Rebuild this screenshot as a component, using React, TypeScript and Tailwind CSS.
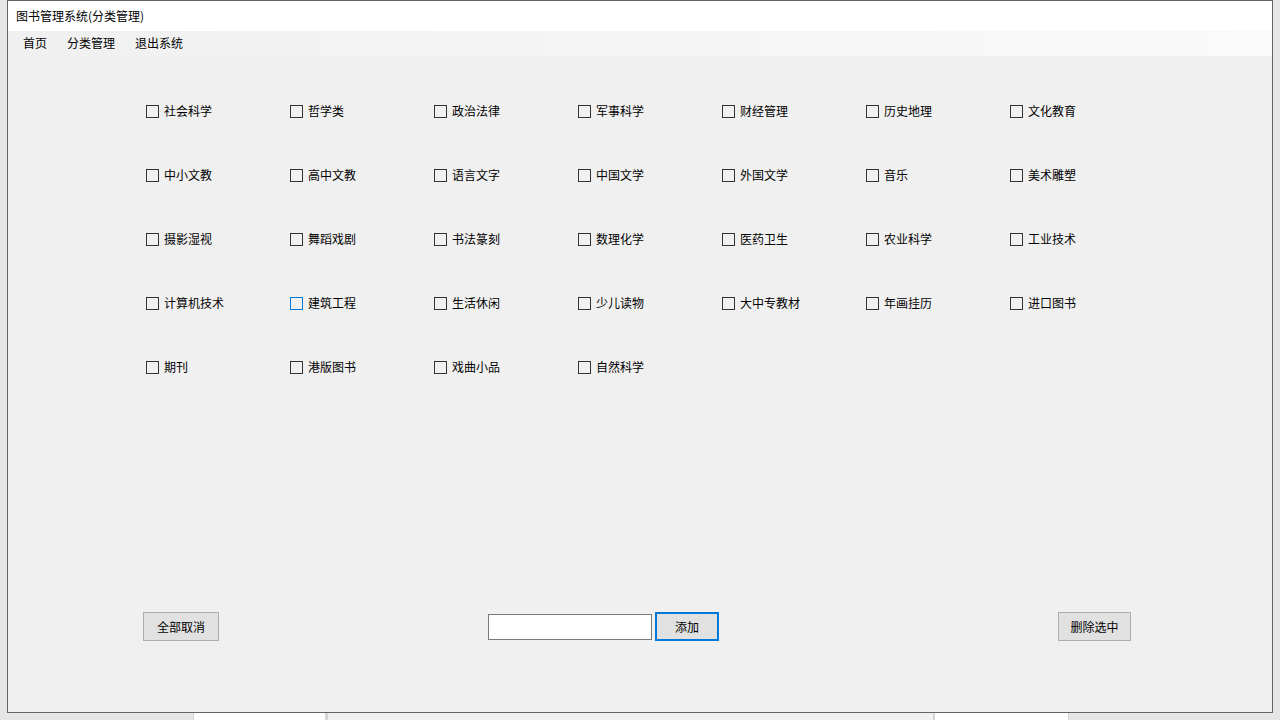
import React from 'react';

const categories = [
  ['社会科学', '哲学类', '政治法律', '军事科学', '财经管理', '历史地理', '文化教育'],
  ['中小文教', '高中文教', '语言文字', '中国文学', '外国文学', '音乐', '美术雕塑'],
  ['摄影湿视', '舞蹈戏剧', '书法篆刻', '数理化学', '医药卫生', '农业科学', '工业技术'],
  ['计算机技术', '建筑工程', '生活休闲', '少儿读物', '大中专教材', '年画挂历', '进口图书'],
  ['期刊', '港版图书', '戏曲小品', '自然科学'],
];

const font = "font-['Noto_Sans_CJK_SC','Noto_Sans',sans-serif]";

function CheckItem({ label, focused }: { label: string; focused?: boolean }) {
  return (
    <div className="flex items-center w-[144px] h-[64px]">
      <span
        className={
          'w-[13px] h-[13px] border bg-transparent ' +
          (focused ? 'border-[#0078d7]' : 'border-[#333333]')
        }
      />
      <span className="ml-[5px] text-[12px] leading-none text-black">{label}</span>
    </div>
  );
}

export default function App() {
  return (
    <div className={`w-[1280px] h-[720px] bg-[#e6e6e6] flex flex-col overflow-hidden ${font}`}>
      {/* window */}
      <div className="ml-[7px] w-[1266px] h-[713px] border border-[#646464] bg-[#f0f0f0] flex flex-col">
        {/* title bar */}
        <div className="h-[30px] bg-white flex items-center pl-[8px] text-[12px] text-black">
          图书管理系统(分类管理)
        </div>
        {/* menu */}
        <div className="h-[25px] bg-gradient-to-r from-[#f0f0f0] to-[#fafafa] flex items-center pb-[1px] pl-[15px] gap-5 text-[12px] text-black">
          <span>首页</span>
          <span>分类管理</span>
          <span>退出系统</span>
        </div>

        {/* categories */}
        <div className="pl-[138px] pt-[23px] flex flex-col">
          {categories.map((row, r) => (
            <div key={r} className="flex">
              {row.map((c) => (
                <CheckItem key={c} label={c} focused={c === '建筑工程'} />
              ))}
            </div>
          ))}
        </div>

        <div className="flex-1" />

        {/* action row */}
        <div className="flex items-center pl-[135px] mb-[71px] text-[12px] text-black">
          <button className="w-[76px] h-[29px] border border-[#adadad] bg-[#e1e1e1]">全部取消</button>
          <input className="ml-[269px] w-[164px] h-[26px] border border-[#7a7a7a] bg-white outline-none" />
          <button className="ml-[3px] w-[64px] h-[29px] border-2 border-[#0078d7] bg-[#e1e1e1]">添加</button>
          <button className="ml-[339px] w-[73px] h-[29px] border border-[#adadad] bg-[#e1e1e1]">删除选中</button>
        </div>
      </div>

      {/* strip below the window */}
      <div className="flex h-[7px]">
        <div className="w-[193px] bg-[#e6e6e6]" />
        <div className="w-[135px] bg-white border-l border-r-[3px] border-[#d4d4d4]" />
        <div className="w-[605px] bg-[#f0f0f0]" />
        <div className="w-[136px] bg-white border-l-[2px] border-r border-[#d4d4d4]" />
        <div className="flex-1 bg-[#e6e6e6]" />
      </div>
    </div>
  );
}
